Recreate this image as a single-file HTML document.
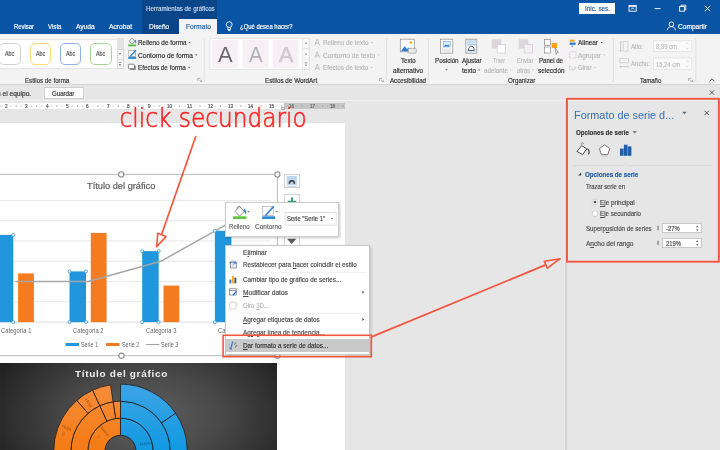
<!DOCTYPE html>
<html lang="es"><head><meta charset="utf-8"><title>Formato de serie de datos</title>
<style>
html,body{margin:0;padding:0}
body{width:720px;height:450px;position:relative;overflow:hidden;background:#e6e6e6;font-family:"Liberation Sans", sans-serif;}
#root{position:absolute;left:0;top:0;width:720px;height:450px;overflow:hidden;will-change:transform;}
.t{position:absolute;white-space:nowrap;line-height:1;transform-origin:0 50%;display:block;-webkit-text-stroke:0.18px currentColor}
.t u{text-decoration-thickness:0.5px;text-underline-offset:0.6px}
</style></head><body><div id="root">
<div style="position:absolute;left:0.00px;top:0.00px;width:720.00px;height:34.30px;background:#0a54a4;"></div>
<div style="position:absolute;left:141.70px;top:0.00px;width:75.30px;height:34.30px;background:#0a4589;"></div>
<div style="position:absolute;left:179.20px;top:18.60px;width:37.80px;height:16.00px;background:#f3f3f3;"></div>
<span id="t0" class="t" style="left:145.50px;top:6px;font-size:6.80px;color:#c9d9ee;font-weight:normal;transform:scaleX(0.9047);">Herramientas de gráficos</span>
<span id="t1" class="t" style="left:13.80px;top:24px;font-size:6.90px;color:#ffffff;font-weight:normal;transform:scaleX(0.8562);">Revisar</span>
<span id="t2" class="t" style="left:48.30px;top:24px;font-size:6.90px;color:#ffffff;font-weight:normal;transform:scaleX(0.8880);">Vista</span>
<span id="t3" class="t" style="left:76.30px;top:24px;font-size:6.90px;color:#ffffff;font-weight:normal;transform:scaleX(0.9628);">Ayuda</span>
<span id="t4" class="t" style="left:109.30px;top:24px;font-size:6.90px;color:#ffffff;font-weight:normal;transform:scaleX(0.9768);">Acrobat</span>
<span id="t5" class="t" style="left:149.30px;top:24px;font-size:6.90px;color:#ffffff;font-weight:normal;transform:scaleX(0.9416);">Diseño</span>
<span id="t6" class="t" style="left:185.50px;top:24px;font-size:6.90px;color:#2460a8;font-weight:normal;transform:scaleX(0.9744);">Formato</span>
<span id="t7" class="t" style="left:240.00px;top:24px;font-size:6.90px;color:#ffffff;font-weight:normal;transform:scaleX(0.8620);">¿Qué desea hacer?</span>
<span id="t8" class="t" style="left:678.00px;top:24px;font-size:6.90px;color:#ffffff;font-weight:normal;transform:scaleX(0.9587);">Compartir</span>
<div style="position:absolute;left:579.30px;top:3.30px;width:35.70px;height:10.50px;background:#fff;"></div>
<span id="t9" class="t" style="left:585.00px;top:5px;font-size:7.00px;color:#2460a8;font-weight:normal;transform:scaleX(0.9050);">Inic. ses.</span>
<svg style="position:absolute;left:0;top:0" width="720" height="35" viewBox="0 0 720 35" fill="none" stroke="#fff" stroke-width="0.9">
<!-- lightbulb -->
<circle cx="229.2" cy="24.6" r="2.9"/><path d="M227.9 27.4v2.2h2.6v-2.2M228.1 30.6h2.2"/>
<!-- ribbon display options -->
<rect x="629" y="5.4" width="7.2" height="5.8"/><path d="M631.2 9.4l1.4-1.6 1.4 1.6M629 6.6h7.2"/>
<!-- minimise -->
<path d="M654.5 8.6h6"/>
<!-- restore -->
<rect x="679.6" y="6.6" width="4.8" height="4.6"/><path d="M681 6.6v-1.4h4.8v4.6h-1.4"/>
<!-- close -->
<path d="M704.8 5.8l5.4 5.4M710.2 5.8l-5.4 5.4"/>
<!-- person -->
<circle cx="671.4" cy="24.2" r="2.3"/><path d="M667.3 30.2c0.4-2.6 2-3.6 4.1-3.6s3.7 1 4.1 3.6"/>
</svg>
<div style="position:absolute;left:0.00px;top:34.30px;width:720.00px;height:50.00px;background:#f3f3f3;"></div>
<div style="position:absolute;left:0.00px;top:84.30px;width:720.00px;height:0.80px;background:#d4d4d4;"></div>
<div style="position:absolute;left:0.00px;top:38.60px;width:116.50px;height:30.20px;background:#fff;border-top:0.6px solid #e6e6e6;border-bottom:0.6px solid #e6e6e6;box-sizing:border-box;"></div>
<div style="position:absolute;left:-1.00px;top:43.40px;width:21.50px;height:21.20px;border:1.6px solid #d2d2d2;border-radius:4.8px;box-sizing:border-box;background:#fff;"></div>
<div style="position:absolute;left:29.50px;top:43.40px;width:21.50px;height:21.20px;border:1.6px solid #ffdb78;border-radius:4.8px;box-sizing:border-box;background:#fff;"></div>
<div style="position:absolute;left:59.90px;top:43.40px;width:21.50px;height:21.20px;border:1.6px solid #8db0e6;border-radius:4.8px;box-sizing:border-box;background:#fff;"></div>
<div style="position:absolute;left:90.00px;top:43.40px;width:21.50px;height:21.20px;border:1.6px solid #a6d694;border-radius:4.8px;box-sizing:border-box;background:#fff;"></div>
<span id="t10" class="t" style="left:5.40px;top:51px;font-size:6.50px;color:#555;font-weight:normal;transform:scaleX(0.8212);">Abc</span>
<span id="t11" class="t" style="left:35.70px;top:51px;font-size:6.50px;color:#555;font-weight:normal;transform:scaleX(0.8212);">Abc</span>
<span id="t12" class="t" style="left:66.20px;top:51px;font-size:6.50px;color:#555;font-weight:normal;transform:scaleX(0.8212);">Abc</span>
<span id="t13" class="t" style="left:96.20px;top:51px;font-size:6.50px;color:#555;font-weight:normal;transform:scaleX(0.8212);">Abc</span>
<div style="position:absolute;left:116.50px;top:38.30px;width:7.00px;height:31.00px;background:#f6f6f6;border:0.7px solid #d8d8d8;box-sizing:border-box;"></div>
<div style="position:absolute;left:116.50px;top:38.30px;width:7.00px;height:10.30px;background:#e2e2e2;"></div>
<div style="position:absolute;left:116.50px;top:48.60px;width:7.00px;height:0.60px;background:#d8d8d8;"></div>
<div style="position:absolute;left:116.50px;top:58.90px;width:7.00px;height:0.60px;background:#d8d8d8;"></div>
<svg style="position:absolute;left:0;top:34" width="720" height="52" viewBox="0 34 720 52"><path d="M118.70 53.35h2.60l-1.30 1.30z" fill="#555" stroke="none"/><path d="M118.70 64.35h2.60l-1.30 1.30z" fill="#555" stroke="none"/><path d="M118.6 62.4h2.8" stroke="#555" stroke-width="0.6"/><path d="M204.2 38.5V82" stroke="#dadada" stroke-width="0.8"/><path d="M386.7 38.5V82" stroke="#dadada" stroke-width="0.8"/><path d="M428.3 38.5V82" stroke="#dadada" stroke-width="0.8"/><path d="M613.3 38.5V82" stroke="#dadada" stroke-width="0.8"/><path d="M695.8 38.5V82" stroke="#dadada" stroke-width="0.8"/><path d="M188.45 41.98h2.50l-1.25 1.25z" fill="#555" stroke="none"/><path d="M194.95 54.48h2.50l-1.25 1.25z" fill="#555" stroke="none"/><path d="M187.95 66.97h2.50l-1.25 1.25z" fill="#555" stroke="none"/><path d="M445.25 69.17h2.50l-1.25 1.25z" fill="#555" stroke="none"/><path d="M477.95 69.47h2.50l-1.25 1.25z" fill="#555" stroke="none"/><path d="M600.35 41.98h2.50l-1.25 1.25z" fill="#555" stroke="none"/><path d="M370.75 41.98h2.50l-1.25 1.25z" fill="#c4c4c4" stroke="none"/><path d="M377.45 54.48h2.50l-1.25 1.25z" fill="#c4c4c4" stroke="none"/><path d="M370.45 66.97h2.50l-1.25 1.25z" fill="#c4c4c4" stroke="none"/><path d="M509.35 69.47h2.50l-1.25 1.25z" fill="#c4c4c4" stroke="none"/><path d="M531.75 69.47h2.50l-1.25 1.25z" fill="#c4c4c4" stroke="none"/><path d="M603.35 54.48h2.50l-1.25 1.25z" fill="#c4c4c4" stroke="none"/><path d="M593.75 66.97h2.50l-1.25 1.25z" fill="#c4c4c4" stroke="none"/><path d="M200.3 78.4h-2.6v2.6M199.9 81.6l1.7 0 0-1.7M199.1 79.6l1.8 1.8" stroke="#8a8a8a" stroke-width="0.6" fill="none"/><path d="M382.0 78.4h-2.6v2.6M381.6 81.6l1.7 0 0-1.7M380.8 79.6l1.8 1.8" stroke="#8a8a8a" stroke-width="0.6" fill="none"/><path d="M691.2 78.4h-2.6v2.6M690.8 81.6l1.7 0 0-1.7M690.0 79.6l1.8 1.8" stroke="#8a8a8a" stroke-width="0.6" fill="none"/><path d="M709.6 81.2l2.4-2.4 2.4 2.4" stroke="#444" stroke-width="1" fill="none"/><path d="M132 38.4l3 2.9-3 2.9-2.9-2.9z" fill="#fff" stroke="#666" stroke-width="0.7" stroke-linejoin="round"/><path d="M135.2 39.8c1 0.8 1.2 2.2 0.7 3.4c-0.3-1-0.6-1.6-1-2.2z" fill="#2a7ed0" stroke="#2a7ed0" stroke-width="0.4"/><rect x="128.2" y="44.5" width="8" height="1.8" fill="#4fc236"/><rect x="128.8" y="50.4" width="6.6" height="6" fill="#fff" stroke="#8a8a8a" stroke-width="0.6"/><path d="M130.8 55.8l4.8-5.4" stroke="#2f7fd0" stroke-width="1.4" stroke-linecap="round"/><rect x="128.2" y="56.9" width="8" height="2" fill="#2b8ad6"/><rect x="129.8" y="65.4" width="6" height="4.6" rx="1" fill="#8a8a8a"/><rect x="128.4" y="64.2" width="6" height="4.6" rx="1" fill="#fff" stroke="#555" stroke-width="0.7"/><path d="M314.9 45.3l2.3-6.2 2.3 6.2M315.8 43.3h2.8" stroke="#bdbdbd" stroke-width="0.9" fill="none"/><path d="M314.9 57.8l2.3-6.2 2.3 6.2M315.8 55.8h2.8" stroke="#bdbdbd" stroke-width="0.9" fill="none"/><path d="M314.9 70.3l2.3-6.2 2.3 6.2M315.8 68.3h2.8" stroke="#bdbdbd" stroke-width="0.9" fill="none"/><rect x="210" y="38.3" width="99" height="31.3" fill="#fff" stroke="#dcdcdc" stroke-width="0.7"/><rect x="211.8" y="40" width="26" height="27.6" fill="#f6eff4"/><rect x="242.4" y="40" width="26" height="27.6" fill="#f6eff4"/><rect x="272.6" y="40" width="26" height="27.6" fill="#f6eff4"/><rect x="302.8" y="38.3" width="6.4" height="31.3" fill="#f8f8f8" stroke="#dcdcdc" stroke-width="0.6"/><path d="M302.8 48.7h6.4M302.8 59.1h6.4" stroke="#dcdcdc" stroke-width="0.6"/><path d="M304.80 43.40h2.40l-1.20 -1.20z" fill="#555" stroke="none"/><path d="M304.80 53.80h2.40l-1.20 1.20z" fill="#555" stroke="none"/><path d="M304.80 64.80h2.40l-1.20 1.20z" fill="#555" stroke="none"/><path d="M304.7 62.8h2.6" stroke="#555" stroke-width="0.6"/><rect x="400.3" y="39.2" width="14" height="12.6" fill="#fff" stroke="#8c8c8c" stroke-width="0.7"/><path d="M401 51.2l3.6-5 2.4 2.8 1.8-1.6 3 3.8z" fill="#2b7cd3"/><circle cx="410.8" cy="42.6" r="1.3" fill="#f6a623"/><rect x="408.2" y="48.4" width="8" height="4.8" rx="1" fill="#e9e9e9" stroke="#8c8c8c" stroke-width="0.6"/><rect x="440.4" y="39.2" width="12.4" height="14" fill="#fff" stroke="#8c8c8c" stroke-width="0.7"/><rect x="443.2" y="41.6" width="7" height="5.4" fill="#d9ecfb" stroke="#5a9bd8" stroke-width="0.5"/><path d="M443.6 46.6l2-2.2 1.4 1.2 1.2-1 1.6 2z" fill="#2b7cd3"/><path d="M442 49h9.2M442 50.6h9.2M442 52h9.2" stroke="#c0c0c0" stroke-width="0.5"/><rect x="465.8" y="39.2" width="11" height="14" fill="#eaf3fc" stroke="#8c8c8c" stroke-width="0.7"/><path d="M467 41h8.6M467 42.8h8.6M467 44.6h8.6M467 51h8.6" stroke="#7fb0e4" stroke-width="0.6"/><path d="M468.4 50.4c0-5.6 5.8-5.6 5.8 0z" fill="#fff" stroke="#444" stroke-width="0.9"/><rect x="491.8" y="39.2" width="9.4" height="9.4" fill="#dcd6dc"/><rect x="497.2" y="44.6" width="8.4" height="8.4" fill="#fff" stroke="#d6d0d6" stroke-width="0.8"/><rect x="518.8" y="39.2" width="9.4" height="9.4" fill="#dcd6dc"/><rect x="524.2" y="44.6" width="8.4" height="8.4" fill="#f4eef4" stroke="#d6d0d6" stroke-width="0.8"/><rect x="544.4" y="39.4" width="6" height="6" fill="#fff" stroke="#7a7a7a" stroke-width="0.6"/><rect x="544.4" y="47" width="6" height="6" fill="#fff" stroke="#7a7a7a" stroke-width="0.6"/><rect x="551.6" y="43" width="5.4" height="5" fill="#f6a623"/><path d="M555 47.6l3.2 5-1.4 0.2-0.6 1.6z" fill="#fff" stroke="#555" stroke-width="0.5"/><rect x="569.6" y="39.6" width="5" height="2.2" fill="#f6a623"/><rect x="569.6" y="42.6" width="6" height="2.2" fill="#2b7cd3"/><path d="M570.8 45.8h2.6l-1.3 1.3z" fill="#2b7cd3"/><rect x="569.4" y="51.8" width="6.6" height="6.2" fill="none" stroke="#cbb9cb" stroke-width="0.7" stroke-dasharray="1.2 0.8"/><path d="M569.6 69.8v-4.4l4.4 4.4z" fill="none" stroke="#c4c4c4" stroke-width="0.7"/><path d="M575 66v3.6" stroke="#c4c4c4" stroke-width="0.9"/><rect x="653.3" y="40.8" width="38" height="10.8" fill="#fafafa" stroke="#dedede" stroke-width="0.7"/><rect x="653.3" y="58" width="38" height="11.6" fill="#fafafa" stroke="#dedede" stroke-width="0.7"/><path d="M620.6 41.4v10M619.6 42.8l1-1.4 1 1.4M619.6 50l1 1.4 1-1.4" stroke="#c2c2c2" stroke-width="0.8" fill="none"/><rect x="623.2" y="41.6" width="4.8" height="9.6" fill="none" stroke="#c8c8c8" stroke-width="0.7"/><rect x="619.8" y="58.4" width="8.8" height="4.4" fill="none" stroke="#c8c8c8" stroke-width="0.7"/><path d="M619.8 66.6h8.8M621 65.6l-1.2 1 1.2 1M627.4 65.6l1.2 1-1.2 1" stroke="#c2c2c2" stroke-width="0.8" fill="none"/><path d="M686 44.2l1.3-1.3 1.3 1.3M686 47.8l1.3 1.3 1.3-1.3" stroke="#c9c9c9" stroke-width="0.7" fill="none"/><path d="M686 62.0l1.3-1.3 1.3 1.3M686 65.6l1.3 1.3 1.3-1.3" stroke="#c9c9c9" stroke-width="0.7" fill="none"/></svg>
<span id="t14" class="t" style="left:138.00px;top:40px;font-size:7.10px;color:#303030;font-weight:normal;transform:scaleX(0.8976);">Relleno de forma</span>
<span id="t15" class="t" style="left:138.00px;top:53px;font-size:7.10px;color:#303030;font-weight:normal;transform:scaleX(0.9297);">Contorno de forma</span>
<span id="t16" class="t" style="left:138.00px;top:65px;font-size:7.10px;color:#303030;font-weight:normal;transform:scaleX(0.8914);">Efectos de forma</span>
<span id="t17" class="t" style="left:24.60px;top:78px;font-size:6.90px;color:#303030;font-weight:normal;transform:scaleX(0.8946);">Estilos de forma</span>
<span id="t18" class="t" style="left:265.30px;top:78px;font-size:6.90px;color:#303030;font-weight:normal;transform:scaleX(0.9168);">Estilos de WordArt</span>
<span id="t19" class="t" style="left:323.30px;top:40px;font-size:7.10px;color:#b9b9b9;font-weight:normal;transform:scaleX(0.8873);">Relleno de texto</span>
<span id="t20" class="t" style="left:323.30px;top:53px;font-size:7.10px;color:#b9b9b9;font-weight:normal;transform:scaleX(0.9254);">Contorno de texto</span>
<span id="t21" class="t" style="left:323.30px;top:65px;font-size:7.10px;color:#b9b9b9;font-weight:normal;transform:scaleX(0.8885);">Efectos de texto</span>
<span id="t22" class="t" style="left:400.70px;top:58px;font-size:7.10px;color:#303030;font-weight:normal;transform:scaleX(0.8663);">Texto</span>
<span id="t23" class="t" style="left:392.50px;top:68px;font-size:7.10px;color:#303030;font-weight:normal;transform:scaleX(0.9226);">alternativo</span>
<span id="t24" class="t" style="left:389.50px;top:78px;font-size:6.90px;color:#303030;font-weight:normal;transform:scaleX(0.8951);">Accesibilidad</span>
<span id="t25" class="t" style="left:434.70px;top:58px;font-size:7.10px;color:#303030;font-weight:normal;transform:scaleX(0.8797);">Posición</span>
<span id="t26" class="t" style="left:461.70px;top:58px;font-size:7.10px;color:#303030;font-weight:normal;transform:scaleX(0.8878);">Ajustar</span>
<span id="t27" class="t" style="left:462.00px;top:68px;font-size:7.10px;color:#303030;font-weight:normal;transform:scaleX(0.9226);">texto</span>
<span id="t28" class="t" style="left:492.80px;top:58px;font-size:7.10px;color:#b9b9b9;font-weight:normal;transform:scaleX(0.7191);">Traer</span>
<span id="t29" class="t" style="left:484.00px;top:68px;font-size:7.10px;color:#b9b9b9;font-weight:normal;transform:scaleX(0.8817);">adelante</span>
<span id="t30" class="t" style="left:517.00px;top:58px;font-size:7.10px;color:#b9b9b9;font-weight:normal;transform:scaleX(0.8106);">Enviar</span>
<span id="t31" class="t" style="left:517.00px;top:68px;font-size:7.10px;color:#b9b9b9;font-weight:normal;transform:scaleX(0.8238);">atrás</span>
<span id="t32" class="t" style="left:539.20px;top:58px;font-size:7.10px;color:#303030;font-weight:normal;transform:scaleX(0.8567);">Panel de</span>
<span id="t33" class="t" style="left:538.00px;top:68px;font-size:7.10px;color:#303030;font-weight:normal;transform:scaleX(0.8993);">selección</span>
<span id="t34" class="t" style="left:578.30px;top:40px;font-size:7.10px;color:#303030;font-weight:normal;transform:scaleX(0.9052);">Alinear</span>
<span id="t35" class="t" style="left:578.30px;top:53px;font-size:7.10px;color:#b9b9b9;font-weight:normal;transform:scaleX(0.9109);">Agrupar</span>
<span id="t36" class="t" style="left:578.30px;top:65px;font-size:7.10px;color:#b9b9b9;font-weight:normal;transform:scaleX(0.8500);">Girar</span>
<span id="t37" class="t" style="left:507.60px;top:78px;font-size:6.90px;color:#303030;font-weight:normal;transform:scaleX(0.9053);">Organizar</span>
<span id="t38" class="t" style="left:630.80px;top:44px;font-size:7.10px;color:#b9b9b9;font-weight:normal;transform:scaleX(0.8590);">Alto:</span>
<span id="t39" class="t" style="left:630.80px;top:61px;font-size:7.10px;color:#b9b9b9;font-weight:normal;transform:scaleX(0.8554);">Ancho:</span>
<span id="t40" class="t" style="left:656.20px;top:44px;font-size:6.80px;color:#bdbdbd;font-weight:normal;transform:scaleX(0.8682);">8,89 cm</span>
<span id="t41" class="t" style="left:656.20px;top:62px;font-size:6.80px;color:#bdbdbd;font-weight:normal;transform:scaleX(0.8581);">15,24 cm</span>
<span id="t42" class="t" style="left:639.70px;top:78px;font-size:6.90px;color:#303030;font-weight:normal;transform:scaleX(0.8648);">Tamaño</span>
<span id="t43" class="t" style="left:217.60px;top:45px;font-size:21.50px;color:#6a6a6a;font-weight:normal;transform:scaleX(1.0179);-webkit-text-stroke:0;">A</span>
<span id="t44" class="t" style="left:248.80px;top:45px;font-size:21.50px;color:#b0b0b0;font-weight:normal;transform:scaleX(0.9481);-webkit-text-stroke:0;">A</span>
<span id="t45" class="t" style="left:278.60px;top:45px;font-size:21.50px;color:#d2ccd0;font-weight:normal;transform:scaleX(0.9900);text-shadow:0 0 0.8px #aaa;-webkit-text-stroke:0;">A</span>
<div style="position:absolute;left:0.00px;top:85.10px;width:720.00px;height:365.00px;background:#e6e6e6;"></div>
<div style="position:absolute;left:0.00px;top:100.20px;width:720.00px;height:0.70px;background:#f0f0f0;"></div>
<span id="t46" class="t" style="left:-2.60px;top:90px;font-size:7.20px;color:#303030;font-weight:normal;transform:scaleX(0.9201);">n el equipo.</span>
<div style="position:absolute;left:44.00px;top:87.20px;width:40.00px;height:11.40px;background:#fdfdfd;border:0.7px solid #cfcfcf;box-sizing:border-box;"></div>
<span id="t47" class="t" style="left:52.20px;top:90px;font-size:7.20px;color:#303030;font-weight:normal;transform:scaleX(0.8493);">Guardar</span>
<svg style="position:absolute;left:706;top:87" width="12" height="12" viewBox="706 87 12 12"><path d="M709.8 90.4l4.2 4.2M714 90.4l-4.2 4.2" stroke="#444" stroke-width="0.9"/></svg>
<div style="position:absolute;left:0.00px;top:103.10px;width:284.00px;height:6.30px;background:#fdfdfd;"></div>
<div style="position:absolute;left:284.00px;top:103.10px;width:61.00px;height:6.30px;background:#c6c6c6;"></div>
<div style="position:absolute;left:281.40px;top:106.60px;width:3.20px;height:3.40px;background:#fbfbfb;border:0.5px solid #b0b0b0;box-sizing:border-box;"></div>
<svg style="position:absolute;left:0;top:102" width="346" height="8" viewBox="0 102 346 8"><path d="M-4.2 105.2v1.6" stroke="#777" stroke-width="0.6"/><path d="M-9.3 105.7v0.7M0.9 105.7v0.7" stroke="#777" stroke-width="0.6"/><path d="M16.2 105.2v1.6" stroke="#777" stroke-width="0.6"/><path d="M11.1 105.7v0.7M21.3 105.7v0.7" stroke="#777" stroke-width="0.6"/><path d="M36.6 105.2v1.6" stroke="#777" stroke-width="0.6"/><path d="M31.5 105.7v0.7M41.7 105.7v0.7" stroke="#777" stroke-width="0.6"/><path d="M57.0 105.2v1.6" stroke="#777" stroke-width="0.6"/><path d="M51.9 105.7v0.7M62.1 105.7v0.7" stroke="#777" stroke-width="0.6"/><path d="M77.5 105.2v1.6" stroke="#777" stroke-width="0.6"/><path d="M72.4 105.7v0.7M82.6 105.7v0.7" stroke="#777" stroke-width="0.6"/><path d="M97.9 105.2v1.6" stroke="#777" stroke-width="0.6"/><path d="M92.8 105.7v0.7M103.0 105.7v0.7" stroke="#777" stroke-width="0.6"/><path d="M118.3 105.2v1.6" stroke="#777" stroke-width="0.6"/><path d="M113.2 105.7v0.7M123.4 105.7v0.7" stroke="#777" stroke-width="0.6"/><path d="M138.7 105.2v1.6" stroke="#777" stroke-width="0.6"/><path d="M133.6 105.7v0.7M143.8 105.7v0.7" stroke="#777" stroke-width="0.6"/><path d="M159.1 105.2v1.6" stroke="#777" stroke-width="0.6"/><path d="M154.0 105.7v0.7M164.2 105.7v0.7" stroke="#777" stroke-width="0.6"/><path d="M179.6 105.2v1.6" stroke="#777" stroke-width="0.6"/><path d="M174.5 105.7v0.7M184.7 105.7v0.7" stroke="#777" stroke-width="0.6"/><path d="M200.0 105.2v1.6" stroke="#777" stroke-width="0.6"/><path d="M194.9 105.7v0.7M205.1 105.7v0.7" stroke="#777" stroke-width="0.6"/><path d="M220.4 105.2v1.6" stroke="#777" stroke-width="0.6"/><path d="M215.3 105.7v0.7M225.5 105.7v0.7" stroke="#777" stroke-width="0.6"/><path d="M240.8 105.2v1.6" stroke="#777" stroke-width="0.6"/><path d="M235.7 105.7v0.7M245.9 105.7v0.7" stroke="#777" stroke-width="0.6"/><path d="M261.2 105.2v1.6" stroke="#777" stroke-width="0.6"/><path d="M256.1 105.7v0.7M266.3 105.7v0.7" stroke="#777" stroke-width="0.6"/><path d="M281.7 105.2v1.6" stroke="#777" stroke-width="0.6"/><path d="M276.6 105.7v0.7M286.8 105.7v0.7" stroke="#777" stroke-width="0.6"/><path d="M302.1 105.2v1.6" stroke="#8a8a8a" stroke-width="0.6"/><path d="M297.0 105.7v0.7M307.2 105.7v0.7" stroke="#8a8a8a" stroke-width="0.6"/><path d="M322.5 105.2v1.6" stroke="#8a8a8a" stroke-width="0.6"/><path d="M317.4 105.7v0.7M327.6 105.7v0.7" stroke="#8a8a8a" stroke-width="0.6"/><path d="M342.9 105.2v1.6" stroke="#8a8a8a" stroke-width="0.6"/><path d="M337.8 105.7v0.7M348.0 105.7v0.7" stroke="#8a8a8a" stroke-width="0.6"/></svg>
<span id="t48" class="t" style="left:4.70px;top:104px;font-size:5.20px;color:#555;font-weight:normal;transform:scaleX(0.8995);">2</span>
<span id="t49" class="t" style="left:25.12px;top:104px;font-size:5.20px;color:#555;font-weight:normal;transform:scaleX(0.8995);">3</span>
<span id="t50" class="t" style="left:45.54px;top:104px;font-size:5.20px;color:#555;font-weight:normal;transform:scaleX(0.8995);">4</span>
<span id="t51" class="t" style="left:65.96px;top:104px;font-size:5.20px;color:#555;font-weight:normal;transform:scaleX(0.8995);">5</span>
<span id="t52" class="t" style="left:86.38px;top:104px;font-size:5.20px;color:#555;font-weight:normal;transform:scaleX(0.8995);">6</span>
<span id="t53" class="t" style="left:106.80px;top:104px;font-size:5.20px;color:#555;font-weight:normal;transform:scaleX(0.8995);">7</span>
<span id="t54" class="t" style="left:127.22px;top:104px;font-size:5.20px;color:#555;font-weight:normal;transform:scaleX(0.8995);">8</span>
<span id="t55" class="t" style="left:147.64px;top:104px;font-size:5.20px;color:#555;font-weight:normal;transform:scaleX(0.8995);">9</span>
<span id="t56" class="t" style="left:166.76px;top:104px;font-size:5.20px;color:#555;font-weight:normal;transform:scaleX(0.8995);">10</span>
<span id="t57" class="t" style="left:187.18px;top:104px;font-size:5.20px;color:#555;font-weight:normal;transform:scaleX(0.9646);">11</span>
<span id="t58" class="t" style="left:207.60px;top:104px;font-size:5.20px;color:#555;font-weight:normal;transform:scaleX(0.8995);">12</span>
<span id="t59" class="t" style="left:228.02px;top:104px;font-size:5.20px;color:#555;font-weight:normal;transform:scaleX(0.8995);">13</span>
<span id="t60" class="t" style="left:248.44px;top:104px;font-size:5.20px;color:#555;font-weight:normal;transform:scaleX(0.8995);">14</span>
<span id="t61" class="t" style="left:268.86px;top:104px;font-size:5.20px;color:#555;font-weight:normal;transform:scaleX(0.8995);">15</span>
<span id="t62" class="t" style="left:289.28px;top:104px;font-size:5.20px;color:#666;font-weight:normal;transform:scaleX(0.8995);">16</span>
<span id="t63" class="t" style="left:309.70px;top:104px;font-size:5.20px;color:#666;font-weight:normal;transform:scaleX(0.8995);">17</span>
<span id="t64" class="t" style="left:330.12px;top:104px;font-size:5.20px;color:#666;font-weight:normal;transform:scaleX(0.8995);">18</span>
<div style="position:absolute;left:0.00px;top:122.90px;width:345.00px;height:327.10px;background:#fff;"></div>
<svg style="position:absolute;left:0;top:160" width="300" height="210" viewBox="0 160 300 210"><path d="M0 301.8H270.5" stroke="#dedede" stroke-width="0.7"/><path d="M0 281.5H270.5" stroke="#dedede" stroke-width="0.7"/><path d="M0 261.3H270.5" stroke="#dedede" stroke-width="0.7"/><path d="M0 241.0H270.5" stroke="#dedede" stroke-width="0.7"/><path d="M0 220.7H270.5" stroke="#dedede" stroke-width="0.7"/><path d="M0 200.4H270.5" stroke="#dedede" stroke-width="0.7"/><path d="M0 322.1H270.5" stroke="#cfcfcf" stroke-width="0.7"/><rect x="-3.2" y="234.9" width="16.5" height="87.2" fill="#2196dc"/><rect x="18.1" y="273.4" width="15.8" height="48.7" fill="#f47b20"/><rect x="69.5" y="271.4" width="16.5" height="50.7" fill="#2196dc"/><rect x="90.8" y="232.9" width="15.8" height="89.2" fill="#f47b20"/><rect x="142.2" y="251.1" width="16.5" height="71.0" fill="#2196dc"/><rect x="163.5" y="285.6" width="15.8" height="36.5" fill="#f47b20"/><rect x="214.9" y="230.8" width="16.5" height="91.3" fill="#2196dc"/><rect x="236.2" y="265.3" width="15.8" height="56.8" fill="#f47b20"/><polyline points="15.4,281.5 88.1,281.5 160.8,261.3 233.5,220.7" fill="none" stroke="#a6a6a6" stroke-width="1.5" stroke-linejoin="round"/><circle cx="-3.2" cy="234.9" r="1.5" fill="#fff" stroke="#2f9ae0" stroke-width="0.8"/><circle cx="13.3" cy="234.9" r="1.5" fill="#fff" stroke="#2f9ae0" stroke-width="0.8"/><circle cx="-3.2" cy="322.1" r="1.5" fill="#fff" stroke="#2f9ae0" stroke-width="0.8"/><circle cx="13.3" cy="322.1" r="1.5" fill="#fff" stroke="#2f9ae0" stroke-width="0.8"/><circle cx="69.5" cy="271.4" r="1.5" fill="#fff" stroke="#2f9ae0" stroke-width="0.8"/><circle cx="86.0" cy="271.4" r="1.5" fill="#fff" stroke="#2f9ae0" stroke-width="0.8"/><circle cx="69.5" cy="322.1" r="1.5" fill="#fff" stroke="#2f9ae0" stroke-width="0.8"/><circle cx="86.0" cy="322.1" r="1.5" fill="#fff" stroke="#2f9ae0" stroke-width="0.8"/><circle cx="142.2" cy="251.1" r="1.5" fill="#fff" stroke="#2f9ae0" stroke-width="0.8"/><circle cx="158.7" cy="251.1" r="1.5" fill="#fff" stroke="#2f9ae0" stroke-width="0.8"/><circle cx="142.2" cy="322.1" r="1.5" fill="#fff" stroke="#2f9ae0" stroke-width="0.8"/><circle cx="158.7" cy="322.1" r="1.5" fill="#fff" stroke="#2f9ae0" stroke-width="0.8"/><circle cx="214.9" cy="230.8" r="1.5" fill="#fff" stroke="#2f9ae0" stroke-width="0.8"/><circle cx="231.4" cy="230.8" r="1.5" fill="#fff" stroke="#2f9ae0" stroke-width="0.8"/><circle cx="214.9" cy="322.1" r="1.5" fill="#fff" stroke="#2f9ae0" stroke-width="0.8"/><circle cx="231.4" cy="322.1" r="1.5" fill="#fff" stroke="#2f9ae0" stroke-width="0.8"/><rect x="65.5" y="343" width="13.5" height="3" fill="#2196dc"/><rect x="106" y="343" width="13.5" height="3" fill="#f47b20"/><path d="M146 344.5h13.4" stroke="#a3a3a3" stroke-width="1.1"/><path d="M0 174.4H277.4V355.7H0" fill="none" stroke="#b3b3b3" stroke-width="0.9"/><circle cx="121.2" cy="174.4" r="2.6" fill="#fff" stroke="#8c8c8c" stroke-width="1.1"/><circle cx="277.4" cy="174.4" r="2.6" fill="#fff" stroke="#8c8c8c" stroke-width="1.1"/><circle cx="121.5" cy="355.7" r="2.6" fill="#fff" stroke="#8c8c8c" stroke-width="1.1"/><circle cx="277.4" cy="355.7" r="2.6" fill="#fff" stroke="#8c8c8c" stroke-width="1.1"/><circle cx="277.4" cy="265.0" r="2.6" fill="#fff" stroke="#8c8c8c" stroke-width="1.1"/></svg>
<span id="t65" class="t" style="left:87.20px;top:182px;font-size:9.20px;color:#595959;font-weight:normal;transform:scaleX(1.0070);">Título del gráfico</span>
<span id="t66" class="t" style="left:0.60px;top:328px;font-size:6.30px;color:#686868;font-weight:normal;transform:scaleX(0.9238);-webkit-text-stroke:0;">Categoría 1</span>
<span id="t67" class="t" style="left:73.20px;top:328px;font-size:6.30px;color:#686868;font-weight:normal;transform:scaleX(0.9299);-webkit-text-stroke:0;">Categoría 2</span>
<span id="t68" class="t" style="left:145.80px;top:328px;font-size:6.30px;color:#686868;font-weight:normal;transform:scaleX(0.9238);-webkit-text-stroke:0;">Categoría 3</span>
<span id="t69" class="t" style="left:218.40px;top:328px;font-size:6.30px;color:#686868;font-weight:normal;transform:scaleX(0.9238);-webkit-text-stroke:0;">Categoría 4</span>
<span id="t70" class="t" style="left:81.00px;top:342px;font-size:6.30px;color:#686868;font-weight:normal;transform:scaleX(0.8520);-webkit-text-stroke:0;">Serie 1</span>
<span id="t71" class="t" style="left:121.60px;top:342px;font-size:6.30px;color:#686868;font-weight:normal;transform:scaleX(0.8620);-webkit-text-stroke:0;">Serie 2</span>
<span id="t72" class="t" style="left:161.20px;top:342px;font-size:6.30px;color:#686868;font-weight:normal;transform:scaleX(0.8720);-webkit-text-stroke:0;">Serie 3</span>
<svg style="position:absolute;left:0;top:362.8px" width="277.4" height="87.2" viewBox="0 362.8 277.4 87.2"><defs><radialGradient id="dg" cx="0.52" cy="0.62" r="0.62" gradientTransform="translate(0.52 0.62) scale(1 1.9) translate(-0.52 -0.62)"><stop offset="0" stop-color="#606060"/><stop offset="0.45" stop-color="#484848"/><stop offset="1" stop-color="#1e1e1e"/></radialGradient><linearGradient id="gb" x1="0" y1="383" x2="0" y2="450" gradientUnits="userSpaceOnUse"><stop offset="0" stop-color="#3ea4e4"/><stop offset="1" stop-color="#119ae2"/></linearGradient><linearGradient id="go" x1="0" y1="383" x2="0" y2="450" gradientUnits="userSpaceOnUse"><stop offset="0" stop-color="#f68d3c"/><stop offset="1" stop-color="#f57b14"/></linearGradient></defs><rect x="0" y="362.8" width="277.4" height="87.2" fill="url(#dg)"/><path d="M120.50 435.10L120.50 418.00A32.60 32.60 0 0 1 148.73 466.90L133.92 458.35A15.50 15.50 0 0 0 120.50 435.10Z" fill="url(#gb)" stroke="#1c1c1c" stroke-width="0.8" stroke-linejoin="round"/><path d="M120.50 418.00L120.50 401.00A49.60 49.60 0 0 1 163.45 475.40L148.73 466.90A32.60 32.60 0 0 0 120.50 418.00Z" fill="url(#gb)" stroke="#1c1c1c" stroke-width="0.8" stroke-linejoin="round"/><path d="M120.50 401.00L120.50 383.90A66.70 66.70 0 0 1 175.67 413.11L161.52 422.72A49.60 49.60 0 0 0 120.50 401.00Z" fill="url(#gb)" stroke="#1c1c1c" stroke-width="0.8" stroke-linejoin="round"/><path d="M161.52 422.72L175.67 413.11A66.70 66.70 0 0 1 178.26 483.95L163.45 475.40A49.60 49.60 0 0 0 161.52 422.72Z" fill="url(#gb)" stroke="#1c1c1c" stroke-width="0.8" stroke-linejoin="round"/><path d="M120.50 435.10L120.50 418.00A32.60 32.60 0 0 0 92.27 466.90L107.08 458.35A15.50 15.50 0 0 1 120.50 435.10Z" fill="url(#go)" stroke="#1c1c1c" stroke-width="0.8" stroke-linejoin="round"/><path d="M120.50 418.00L120.50 401.00A49.60 49.60 0 0 0 113.08 401.56L115.63 418.37A32.60 32.60 0 0 1 120.50 418.00Z" fill="url(#go)" stroke="#1c1c1c" stroke-width="0.8" stroke-linejoin="round"/><path d="M115.63 418.37L113.08 401.56A49.60 49.60 0 0 0 99.70 405.57L106.83 421.01A32.60 32.60 0 0 1 115.63 418.37Z" fill="url(#go)" stroke="#1c1c1c" stroke-width="0.8" stroke-linejoin="round"/><path d="M106.83 421.01L99.70 405.57A49.60 49.60 0 0 0 77.55 475.40L92.27 466.90A32.60 32.60 0 0 1 106.83 421.01Z" fill="url(#go)" stroke="#1c1c1c" stroke-width="0.8" stroke-linejoin="round"/><path d="M113.08 401.56L110.53 384.65A66.70 66.70 0 0 0 92.52 390.05L99.70 405.57A49.60 49.60 0 0 1 113.08 401.56Z" fill="url(#go)" stroke="#1c1c1c" stroke-width="0.8" stroke-linejoin="round"/><path d="M99.70 405.57L92.52 390.05A66.70 66.70 0 0 0 76.74 400.26L87.96 413.17A49.60 49.60 0 0 1 99.70 405.57Z" fill="url(#go)" stroke="#1c1c1c" stroke-width="0.8" stroke-linejoin="round"/><path d="M87.96 413.17L76.74 400.26A66.70 66.70 0 0 0 62.74 483.95L77.55 475.40A49.60 49.60 0 0 1 87.96 413.17Z" fill="url(#go)" stroke="#1c1c1c" stroke-width="0.8" stroke-linejoin="round"/></svg>
<span id="t73" class="t" style="left:74.50px;top:369px;font-size:9.90px;color:#f2f2f2;font-weight:bold;transform:scaleX(1.0092);letter-spacing:0.7px;-webkit-text-stroke:0;">Título del gráfico</span>
<span id="t74" class="t" style="left:62.10px;top:426px;font-size:4.40px;color:rgba(125,55,0,0.7);font-weight:normal;transform:scaleX(1.0973);transform-origin:50% 50%;rotate:22deg;-webkit-text-stroke:0;">Hoja</span>
<span id="t75" class="t" style="left:61.10px;top:432px;font-size:4.40px;color:rgba(125,55,0,0.7);font-weight:normal;transform:scaleX(0.7822);transform-origin:50% 50%;rotate:22deg;-webkit-text-stroke:0;">11</span>
<span id="t76" class="t" style="left:98.40px;top:429px;font-size:4.40px;color:rgba(125,55,0,0.7);font-weight:normal;transform:scaleX(1.1155);transform-origin:50% 50%;rotate:48deg;-webkit-text-stroke:0;">Rama</span>
<span id="t77" class="t" style="left:97.40px;top:435px;font-size:4.40px;color:rgba(125,55,0,0.7);font-weight:normal;transform:scaleX(0.4882);transform-origin:50% 50%;rotate:48deg;-webkit-text-stroke:0;">2</span>
<span id="t78" class="t" style="left:84.40px;top:401px;font-size:4.20px;color:rgba(125,55,0,0.7);font-weight:normal;transform:scaleX(1.2162);transform-origin:50% 50%;rotate:57deg;-webkit-text-stroke:0;">Hoja</span>
<span id="t79" class="t" style="left:139.80px;top:442px;font-size:4.40px;color:rgba(0,55,105,0.65);font-weight:normal;transform:scaleX(1.0149);transform-origin:50% 50%;rotate:-8deg;-webkit-text-stroke:0;">Rama</span>
<div style="position:absolute;left:284.20px;top:173.60px;width:15.60px;height:14.80px;background:#fdfdfd;border:0.8px solid #cfcfcf;box-sizing:border-box;"></div>
<div style="position:absolute;left:284.20px;top:194.30px;width:15.60px;height:15.10px;background:#fff;border:0.8px solid #d6d6d6;box-sizing:border-box;"></div>
<div style="position:absolute;left:284.20px;top:215.10px;width:15.60px;height:15.10px;background:#fff;border:0.8px solid #d6d6d6;box-sizing:border-box;"></div>
<div style="position:absolute;left:284.20px;top:235.90px;width:15.60px;height:15.10px;background:#fff;border:0.8px solid #d6d6d6;box-sizing:border-box;"></div>
<svg style="position:absolute;left:284px;top:173px" width="16" height="80" viewBox="284 173 16 80">
<rect x="286.7" y="176" width="10.2" height="10.9" fill="#bcd6ef"/><rect x="286.7" y="185" width="10.2" height="1" fill="#eef4fb"/>
<path d="M289.4 183.8c0-4.2 5-4.2 5 0" fill="none" stroke="#3a2f2a" stroke-width="1.5"/>
<path d="M287.8 201.7h8.4M292 197.6v8.4" stroke="#2e9e78" stroke-width="2"/>
<path d="M287 238.8h9.4l-4.7 5.2z" fill="#5a5a5a"/>
</svg>
<div style="position:absolute;left:224.50px;top:201.90px;width:114.30px;height:34.90px;background:#fff;border:0.7px solid #cdcdcd;box-sizing:border-box;box-shadow:0.6px 1px 2.4px rgba(0,0,0,0.22);"></div>
<svg style="position:absolute;left:224px;top:202px" width="116" height="35" viewBox="224 202 116 35">
<path d="M239.6 206.8l4.7 4.6-4.7 4.6-4.6-4.6z" fill="#fff" stroke="#6a6a6a" stroke-width="0.8" stroke-linejoin="round"/>
<path d="M237.2 209.2c-0.8-3.4 3.2-4 3.6-1.2" fill="none" stroke="#6a6a6a" stroke-width="0.7"/>
<path d="M244.3 208.8c1.6 1.2 2 3.4 1.2 5.2c-0.5-1.5-1-2.4-1.6-3.2z" fill="#2a7ed0" stroke="#2a7ed0" stroke-width="0.5"/>
<rect x="233.1" y="216.3" width="13.3" height="2.7" fill="#5cc83a"/>
<path d="M247.2 211.3h2.5l-1.25 1.3z" fill="#555"/>
<rect x="262.8" y="206.6" width="10.6" height="9" fill="#fff" stroke="#9a9a9a" stroke-width="0.6"/>
<path d="M266 215l7.2-8" stroke="#2f7fd0" stroke-width="1.7" stroke-linecap="round"/>
<rect x="262.2" y="216.3" width="12.9" height="2.7" fill="#2b8ad6"/>
<path d="M275.5 211.3h2.5l-1.25 1.3z" fill="#555"/>
<rect x="285.1" y="212.4" width="51" height="12.7" fill="#fff" stroke="#d2d2d2" stroke-width="0.7"/>
<path d="M330.8 218.2h2.4l-1.2 1.2z" fill="#555"/>
</svg>
<span id="t80" class="t" style="left:229.20px;top:224px;font-size:6.90px;color:#666;font-weight:normal;transform:scaleX(0.8813);">Relleno</span>
<span id="t81" class="t" style="left:255.30px;top:224px;font-size:6.90px;color:#666;font-weight:normal;transform:scaleX(0.9415);">Contorno</span>
<span id="t82" class="t" style="left:287.40px;top:216px;font-size:6.70px;color:#444;font-weight:normal;transform:scaleX(0.8751);">Serie "Serie 1"</span>
<div style="position:absolute;left:224.50px;top:244.50px;width:145.60px;height:110.80px;background:#fff;border:0.7px solid #c9c9c9;box-sizing:border-box;box-shadow:0.8px 1.2px 3px rgba(0,0,0,0.25);"></div>
<div style="position:absolute;left:225.20px;top:338.80px;width:144.20px;height:13.40px;background:#c9c9c9;"></div>
<div style="position:absolute;left:243.00px;top:272.10px;width:124.00px;height:0.70px;background:#f0f0f0;"></div>
<div style="position:absolute;left:243.00px;top:312.60px;width:124.00px;height:0.70px;background:#f0f0f0;"></div>
<span id="t83" class="t" style="left:243.00px;top:249px;font-size:7.00px;color:#4a4a4a;font-weight:normal;transform:scaleX(0.9487);">E<u>l</u>iminar</span>
<span id="t84" class="t" style="left:243.00px;top:261px;font-size:7.00px;color:#4a4a4a;font-weight:normal;transform:scaleX(0.9017);">Restablecer para <u>h</u>acer coincidir el estilo</span>
<span id="t85" class="t" style="left:243.00px;top:276px;font-size:7.00px;color:#4a4a4a;font-weight:normal;transform:scaleX(0.9055);">Cambiar tipo de gráfico de series...</span>
<span id="t86" class="t" style="left:243.00px;top:289px;font-size:7.00px;color:#4a4a4a;font-weight:normal;transform:scaleX(0.9456);"><u>M</u>odificar datos</span>
<span id="t87" class="t" style="left:243.00px;top:302px;font-size:7.00px;color:#b4b4b4;font-weight:normal;transform:scaleX(0.8676);">Giro <u>3</u>D...</span>
<span id="t88" class="t" style="left:243.00px;top:316px;font-size:7.00px;color:#4a4a4a;font-weight:normal;transform:scaleX(0.9124);"><u>A</u>gregar etiquetas de datos</span>
<span id="t89" class="t" style="left:243.00px;top:329px;font-size:7.00px;color:#4a4a4a;font-weight:normal;transform:scaleX(0.9108);">Ag<u>r</u>egar línea de tendencia...</span>
<span id="t90" class="t" style="left:243.00px;top:342px;font-size:7.00px;color:#333;font-weight:normal;transform:scaleX(0.9020);"><u>D</u>ar formato a serie de datos...</span>
<svg style="position:absolute;left:226px;top:258px" width="144" height="94" viewBox="226 258 144 94">
<path d="M362.4 290.6l1.8 1.6-1.8 1.6z M362.4 317.8l1.8 1.6-1.8 1.6z" fill="#444"/>
<!-- reset -->
<rect x="230.4" y="262.6" width="6" height="5.4" fill="#fff" stroke="#5f6f86" stroke-width="0.7"/><path d="M229.2 263.4c0.6-2.6 4-3 5.6-1.4l0.8-0.8 0.2 2.4-2.4-0.2 0.8-0.8" fill="none" stroke="#2b6fc0" stroke-width="0.7"/><path d="M231.6 264.6h3.6M231.6 266.2h3.6" stroke="#8a99b0" stroke-width="0.5"/>
<!-- change chart type -->
<rect x="229.4" y="279.6" width="1.9" height="3.8" fill="#2b7cd3"/><rect x="231.9" y="276" width="1.9" height="7.4" fill="#f6a623"/><rect x="234.4" y="277.6" width="1.9" height="5.8" fill="#44546a"/>
<!-- edit data -->
<rect x="229.6" y="288.8" width="6.6" height="6.2" fill="#fff" stroke="#5f6f86" stroke-width="0.7"/><path d="M229.6 290.6h6.6" stroke="#5f6f86" stroke-width="0.7"/><path d="M232.8 295.4l3.8-4.2" stroke="#2b7cd3" stroke-width="1.3"/>
<!-- 3d rotation disabled -->
<rect x="229.4" y="302.2" width="6.8" height="6.8" rx="1.6" fill="#fff" stroke="#cdcdcd" stroke-width="1"/>
<!-- format series -->
<path d="M232.8 341.6l-1.6 5.4" stroke="#2b7cd3" stroke-width="1.2"/><circle cx="230.8" cy="348.4" r="1.2" fill="#2b7cd3"/><path d="M235.6 342.4l-1 2.2M236.8 345.2l-1.6 2.4" stroke="#555" stroke-width="0.8"/>
</svg>
<div style="position:absolute;left:565.40px;top:100.50px;width:1.40px;height:349.50px;background:#d5d5d5;"></div>
<div style="position:absolute;left:563.80px;top:100.50px;width:1.20px;height:349.50px;background:#ececec;"></div>
<span id="t91" class="t" style="left:573.80px;top:109px;font-size:11.60px;color:#3570b4;font-weight:normal;transform:scaleX(0.9367);-webkit-text-stroke:0;">Formato de serie d...</span>
<span id="t92" class="t" style="left:576.00px;top:130px;font-size:6.90px;color:#333;font-weight:bold;transform:scaleX(0.8893);">Opciones de serie</span>
<span id="t93" class="t" style="left:584.80px;top:172px;font-size:6.90px;color:#1f5ea9;font-weight:bold;transform:scaleX(0.8960);">Opciones de serie</span>
<span id="t94" class="t" style="left:585.50px;top:184px;font-size:6.90px;color:#4a4a4a;font-weight:normal;transform:scaleX(0.8439);">Trazar serie en</span>
<span id="t95" class="t" style="left:600.40px;top:200px;font-size:6.90px;color:#4a4a4a;font-weight:normal;transform:scaleX(0.9265);"><u>E</u>je principal</span>
<span id="t96" class="t" style="left:600.40px;top:211px;font-size:6.90px;color:#4a4a4a;font-weight:normal;transform:scaleX(0.8989);"><u>E</u>je secundario</span>
<span id="t97" class="t" style="left:585.50px;top:226px;font-size:6.90px;color:#4a4a4a;font-weight:normal;transform:scaleX(0.8929);">Superp<u>o</u>sición de series</span>
<span id="t98" class="t" style="left:585.50px;top:241px;font-size:6.90px;color:#4a4a4a;font-weight:normal;transform:scaleX(0.9459);">A<u>n</u>cho del rango</span>
<div style="position:absolute;left:662.20px;top:223.20px;width:39.50px;height:9.90px;background:#fff;border:0.7px solid #c9c9c9;box-sizing:border-box;"></div>
<div style="position:absolute;left:662.20px;top:238.00px;width:39.50px;height:9.90px;background:#fff;border:0.7px solid #c9c9c9;box-sizing:border-box;"></div>
<span id="t99" class="t" style="left:665.80px;top:226px;font-size:6.60px;color:#4a4a4a;font-weight:normal;transform:scaleX(0.8828);">-27%</span>
<span id="t100" class="t" style="left:665.80px;top:241px;font-size:6.60px;color:#4a4a4a;font-weight:normal;transform:scaleX(0.8770);">219%</span>
<svg style="position:absolute;left:567px;top:100px" width="153" height="165" viewBox="567 100 153 165">
<path d="M682.1 111.7h4.6l-2.3 2.5z" fill="#6a6a6a"/>
<path d="M704.6 110.8l4.2 4.2M708.8 110.8l-4.2 4.2" stroke="#555" stroke-width="1"/>
<path d="M632.5 131.2h4.4l-2.2 2.4z" fill="#6a6a6a"/>
<!-- bucket -->
<path d="M577 151.4l4.8-5.8 5 3.4-4.2 5.6z" fill="#fff" stroke="#444" stroke-width="1" stroke-linejoin="round"/><path d="M581.6 145.2c-1.4-2.6 1.6-3.4 2.2-1" fill="none" stroke="#555" stroke-width="0.6"/><path d="M587.4 148.6c2 1.8 2.2 3.8 1 5.8" fill="none" stroke="#444" stroke-width="1.1"/>
<!-- pentagon -->
<path d="M604.6 144.8l5.2 3.8-2 6h-6.4l-2-6z" fill="#fff" stroke="#777" stroke-width="1" stroke-linejoin="round"/><path d="M601.6 156.2h6" stroke="#c4c4c4" stroke-width="0.9"/>
<!-- bars -->
<rect x="620" y="148.6" width="3.6" height="7.2" fill="#1d5fa8"/><rect x="623.9" y="144.7" width="3.6" height="11.1" fill="#1d5fa8"/><rect x="627.8" y="146.4" width="3.6" height="9.4" fill="#1d5fa8"/>
<!-- separator with notch -->
<path d="M574 165.7h49.4l2.2-2.2 2.2 2.2H712" fill="none" stroke="#d3d3d3" stroke-width="0.7"/>
<path d="M578 175.6h3.2v-3.2z" fill="#444"/>
<!-- radios -->
<circle cx="595" cy="202" r="2.9" fill="#fff" stroke="#b5b5b5" stroke-width="0.6"/><circle cx="595" cy="202" r="1.3" fill="#444"/>
<circle cx="595" cy="213.6" r="2.9" fill="#fff" stroke="#b5b5b5" stroke-width="0.6"/>
<!-- slider thumbs -->
<path d="M658 225.8v4.4M658 240.7v4.4" stroke="#555" stroke-width="0.9"/>
<!-- spinners -->
<path d="M695.9 227.2l1.3-1.5 1.3 1.5zM695.9 229.4l1.3 1.5 1.3-1.5zM695.9 242l1.3-1.5 1.3 1.5zM695.9 244.2l1.3 1.5 1.3-1.5z" fill="#555"/>
</svg>
<svg style="position:absolute;left:0;top:0" width="720" height="450" viewBox="0 0 720 450" fill="none" stroke="#f4563f" stroke-width="1.5">
<rect x="567" y="98.8" width="151.8" height="162.9" stroke-width="1.9"/>
<rect x="223.1" y="335.3" width="148.2" height="21.4" stroke-width="1.6"/>
<path d="M371.6 336.9L545.6 264.9" stroke-width="1.7"/>
<path d="M560.2 258.7L544.3 261.3L547.4 268.1Z" stroke-width="1.6" stroke-linejoin="round"/>
<path d="M195.9 136L161.4 235" stroke-width="1.7"/>
<path d="M156.7 246.6L157.7 233.2L166 236.6Z" stroke-width="1.6" stroke-linejoin="round"/>
</svg>
<svg style="position:absolute;left:100px;top:96px;overflow:visible" width="230" height="44" viewBox="100 96 230 44"><text x="119.6" y="127" textLength="187" lengthAdjust="spacingAndGlyphs" font-family="'DejaVu Sans', 'Liberation Sans', sans-serif" font-weight="200" font-size="26.2" fill="#ff2222" stroke="#ff2222" stroke-width="0.6">click secundario</text></svg>
</div></body></html>
